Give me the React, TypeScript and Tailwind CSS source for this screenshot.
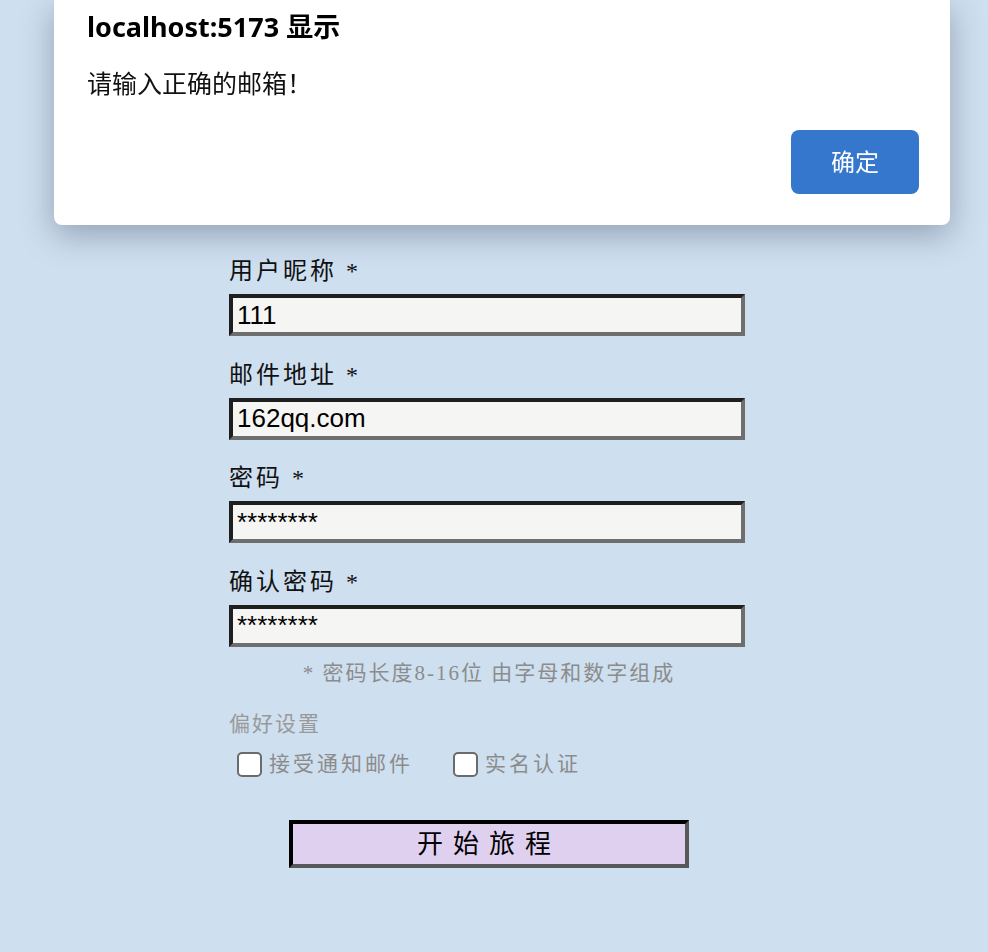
import React from 'react';

const serifStack = { fontFamily: '"Liberation Serif", "Noto Sans CJK SC", serif' };
const sansStack = { fontFamily: '"Noto Sans", "Noto Sans CJK SC", sans-serif' };

function Field({ label, value }: { label: string; value: string }) {
  return (
    <div className="flex flex-col">
      <label className="h-[30px] text-[24px] leading-[30px] tracking-[3px] text-[#111]" style={serifStack}>
        {label} *
      </label>
      <input
        readOnly
        value={value}
        className="mt-2 h-[42px] w-[516px] border-4 border-t-[#1f1f1f] border-l-[#1f1f1f] border-b-[#6e6e6e] border-r-[#6e6e6e] bg-[#f5f5f3] px-1 text-[26px] text-black outline-none"
        style={{ fontFamily: '"Liberation Sans", Arial, sans-serif' }}
      />
    </div>
  );
}

function Check({ label }: { label: string }) {
  return (
    <label className="flex items-center gap-[7px]">
      <input
        type="checkbox"
        className="h-[25px] w-[25px] appearance-none rounded-[5px] border-2 border-[#6b6b6b] bg-white"
      />
      <span className="text-[21px] tracking-[3px] text-[#8c8c8c]" style={serifStack}>
        {label}
      </span>
    </label>
  );
}

export default function App() {
  return (
    <div className="min-h-screen bg-[#cedff0]">
      {/* form */}
      <div className="ml-[229px] flex w-[516px] flex-col gap-[23.5px] pt-[256px]">
        <Field label="用户昵称" value="111" />
        <Field label="邮件地址" value="162qq.com" />
        <Field label="密码" value="********" />
        <Field label="确认密码" value="********" />
      </div>
      <div className="ml-[229px] w-[516px]">
        <p className="mt-[11px] h-[30px] pl-1 text-center text-[21px] leading-[30px] tracking-[2px] text-[#8c8c8c]" style={serifStack}>
          * 密码长度8-16位 由字母和数字组成
        </p>
        <p className="mt-[21px] h-[30px] text-[21px] leading-[30px] tracking-[2px] text-[#999]" style={serifStack}>
          偏好设置
        </p>
        <div className="mt-[11px] flex h-[30px] items-center gap-10 pl-2">
          <Check label="接受通知邮件" />
          <Check label="实名认证" />
        </div>
        <div className="mt-[40px] flex justify-center pl-1">
          <button
            className="h-[48px] w-[400px] border-4 border-t-black border-l-black border-b-[#58585c] border-r-[#58585c] bg-[#e0d0f0] text-[26px] tracking-[10px] text-black"
            style={sansStack}
          >
            开始旅程
          </button>
        </div>
      </div>

      {/* browser alert */}
      <div
        className="fixed left-[54px] top-0 h-[225px] w-[896px] rounded-b-lg bg-white pl-[33px] pr-[31px] pt-[10px] shadow-[0_10px_32px_rgba(40,50,70,0.35)]"
        style={sansStack}
      >
        <h1 className="h-[34px] text-[27px] font-bold leading-[34px] text-black">localhost:5173 显示</h1>
        <p className="mt-[23px] h-8 text-[25px] leading-8 text-[#111]">请输入正确的邮箱！</p>
        <div className="mt-[31px] flex justify-end">
          <button className="h-[64px] w-[128px] rounded-lg bg-[#3477cc] text-[24px] text-white">确定</button>
        </div>
      </div>
    </div>
  );
}
